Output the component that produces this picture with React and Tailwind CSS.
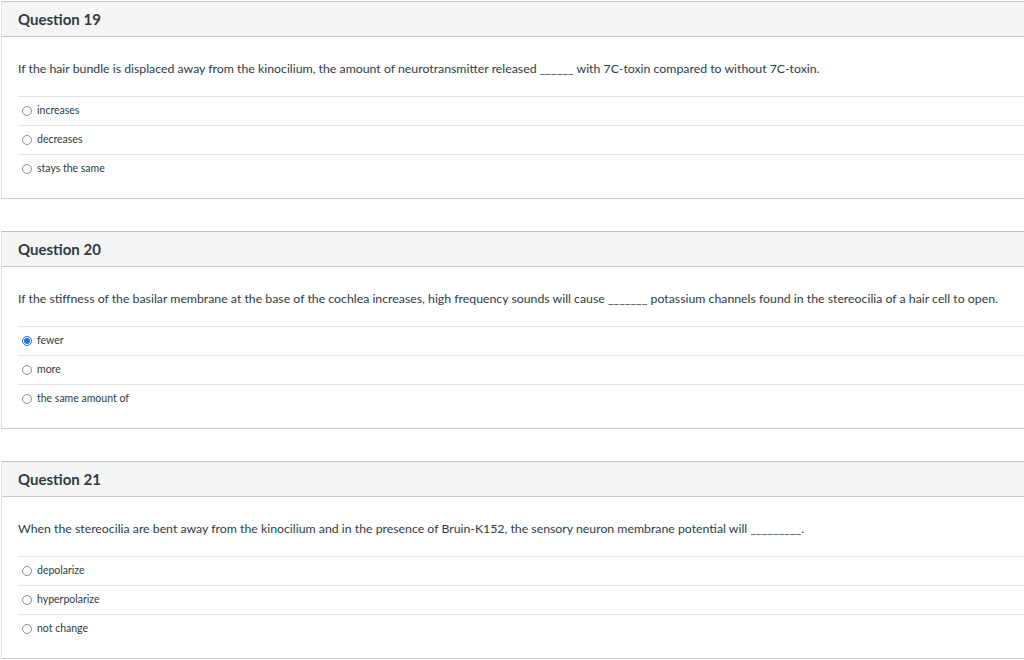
import React from "react";

const questions = [
  {
    num: 19,
    text: "If the hair bundle is displaced away from the kinocilium, the amount of neurotransmitter released ______ with 7C-toxin compared to without 7C-toxin.",
    answers: ["increases", "decreases", "stays the same"],
    selected: -1,
  },
  {
    num: 20,
    text: "If the stiffness of the basilar membrane at the base of the cochlea increases, high frequency sounds will cause _______ potassium channels found in the stereocilia of a hair cell to open.",
    answers: ["fewer", "more", "the same amount of"],
    selected: 0,
  },
  {
    num: 21,
    text: "When the stereocilia are bent away from the kinocilium and in the presence of Bruin-K152, the sensory neuron membrane potential will _________.",
    answers: ["depolarize", "hyperpolarize", "not change"],
    selected: -1,
  },
];

const Radio = ({ checked }) =>
  checked ? (
    <span className="w-[10px] h-[10px] rounded-full border border-[#1a73e8] bg-white flex items-center justify-center shrink-0">
      <span className="w-[6px] h-[6px] rounded-full bg-[#1a73e8]" />
    </span>
  ) : (
    <span className="w-[10px] h-[10px] rounded-full border border-[#8f8f8f] bg-white shrink-0" />
  );

const QuestionCard = ({ q }) => {
  return (
    <div className="ml-[1px] border-t border-l border-b border-t-[#c4c4c4] border-l-[#e2e2e2] border-b-[#c8c8c8] bg-white">
      {/* Header */}
      <div className="h-[35px] bg-[#f5f5f5] border-b border-[#c7c7c7] px-[16px] flex items-center">
        <h2 className="text-[15px] font-bold text-[#2d3b45]">Question {q.num}</h2>
      </div>

      {/* Body */}
      <div className="pl-[16px] pt-[23px] pb-[15px]">
        <p className="text-[12.3px] leading-[18px] text-[#2d3b45] mb-[18px] whitespace-nowrap">{q.text}</p>
        <ul>
          {q.answers.map((a, i) => (
            <li key={a} className="h-[29px] border-t border-[#e4e4e4] flex items-center pl-[4px] pb-[1px] gap-[5px]">
              <Radio checked={q.selected === i} />
              <span className="text-[10.5px] text-[#2d3b45]">{a}</span>
            </li>
          ))}
        </ul>
      </div>
    </div>
  );
};

export default function App() {
  return (
    <div className="w-[1024px] h-[660px] overflow-hidden bg-white pt-[1px] flex flex-col gap-[32px]" style={{ fontFamily: "Lato, 'Open Sans', sans-serif" }}>
      {questions.map((q) => (
        <QuestionCard key={q.num} q={q} />
      ))}
    </div>
  );
}
